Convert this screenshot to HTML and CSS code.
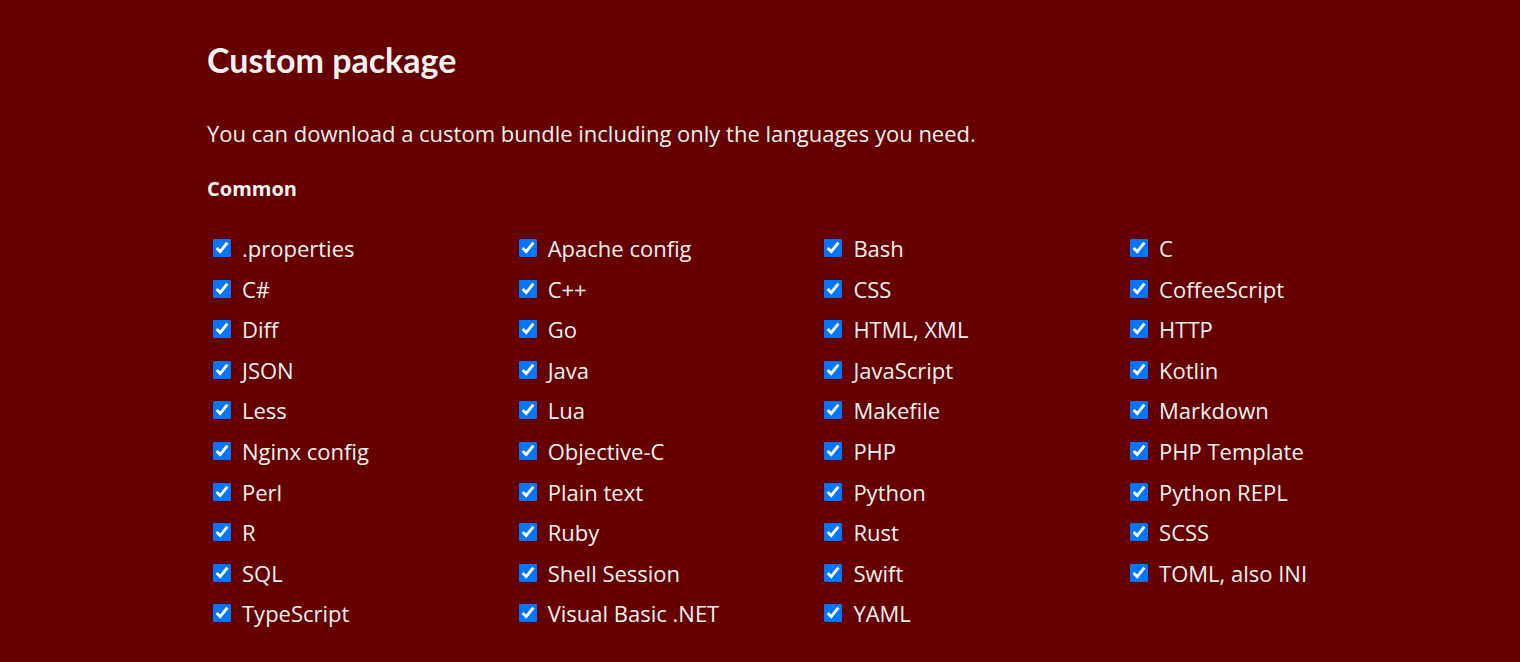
FILE: index.html
```html
<!DOCTYPE html>
<html lang="en">
<head>
<meta charset="utf-8">
<title>Custom package</title>
<link rel="stylesheet" href="styles.css">
</head>
<body>
<main class="page">
  <h2 class="title">Custom package</h2>
  <p class="lead">You can download a custom bundle including only the languages you need.</p>
  <h4 class="group">Common</h4>
  <ul class="langs">
    <li><label><input type="checkbox" checked>.properties</label></li>
    <li><label><input type="checkbox" checked>Apache config</label></li>
    <li><label><input type="checkbox" checked>Bash</label></li>
    <li><label><input type="checkbox" checked>C</label></li>
    <li><label><input type="checkbox" checked>C#</label></li>
    <li><label><input type="checkbox" checked>C++</label></li>
    <li><label><input type="checkbox" checked>CSS</label></li>
    <li><label><input type="checkbox" checked>CoffeeScript</label></li>
    <li><label><input type="checkbox" checked>Diff</label></li>
    <li><label><input type="checkbox" checked>Go</label></li>
    <li><label><input type="checkbox" checked>HTML, XML</label></li>
    <li><label><input type="checkbox" checked>HTTP</label></li>
    <li><label><input type="checkbox" checked>JSON</label></li>
    <li><label><input type="checkbox" checked>Java</label></li>
    <li><label><input type="checkbox" checked>JavaScript</label></li>
    <li><label><input type="checkbox" checked>Kotlin</label></li>
    <li><label><input type="checkbox" checked>Less</label></li>
    <li><label><input type="checkbox" checked>Lua</label></li>
    <li><label><input type="checkbox" checked>Makefile</label></li>
    <li><label><input type="checkbox" checked>Markdown</label></li>
    <li><label><input type="checkbox" checked>Nginx config</label></li>
    <li><label><input type="checkbox" checked>Objective-C</label></li>
    <li><label><input type="checkbox" checked>PHP</label></li>
    <li><label><input type="checkbox" checked>PHP Template</label></li>
    <li><label><input type="checkbox" checked>Perl</label></li>
    <li><label><input type="checkbox" checked>Plain text</label></li>
    <li><label><input type="checkbox" checked>Python</label></li>
    <li><label><input type="checkbox" checked>Python REPL</label></li>
    <li><label><input type="checkbox" checked>R</label></li>
    <li><label><input type="checkbox" checked>Ruby</label></li>
    <li><label><input type="checkbox" checked>Rust</label></li>
    <li><label><input type="checkbox" checked>SCSS</label></li>
    <li><label><input type="checkbox" checked>SQL</label></li>
    <li><label><input type="checkbox" checked>Shell Session</label></li>
    <li><label><input type="checkbox" checked>Swift</label></li>
    <li><label><input type="checkbox" checked>TOML, also INI</label></li>
    <li><label><input type="checkbox" checked>TypeScript</label></li>
    <li><label><input type="checkbox" checked>Visual Basic .NET</label></li>
    <li><label><input type="checkbox" checked>YAML</label></li>
  </ul>
</main>
</body>
</html>
```
FILE: styles.css
```css
html, body {
  margin: 0;
  padding: 0;
  background: #660000;
  height: 100%;
}
body {
  color: #f2f2f2;
  font-family: "Open Sans", "Noto Sans", sans-serif;
  font-size: 22px;
}
.page {
  padding: 0 207px;
  overflow: hidden;
}
.title {
  font-family: "Lato", "Open Sans", sans-serif;
  font-size: 34px;
  font-weight: 700;
  margin: 37px 0 0;
  line-height: 46px;
}
.lead {
  margin: 35px 0 0;
  line-height: 30px;
}
.group {
  font-size: 20px;
  font-weight: 700;
  margin: 26px 0 0;
  line-height: 30px;
}
.langs {
  list-style: none;
  margin: 29px 0 0;
  padding: 0;
  display: grid;
  grid-template-columns: repeat(4, 305.7px);
  grid-auto-rows: 40.6px;
}
.langs label {
  display: flex;
  align-items: center;
  gap: 11px;
  line-height: 30px;
}
.langs input {
  width: 18px;
  height: 18px;
  margin: 0 0 0 6px;
  accent-color: #0075ff;
}
```
